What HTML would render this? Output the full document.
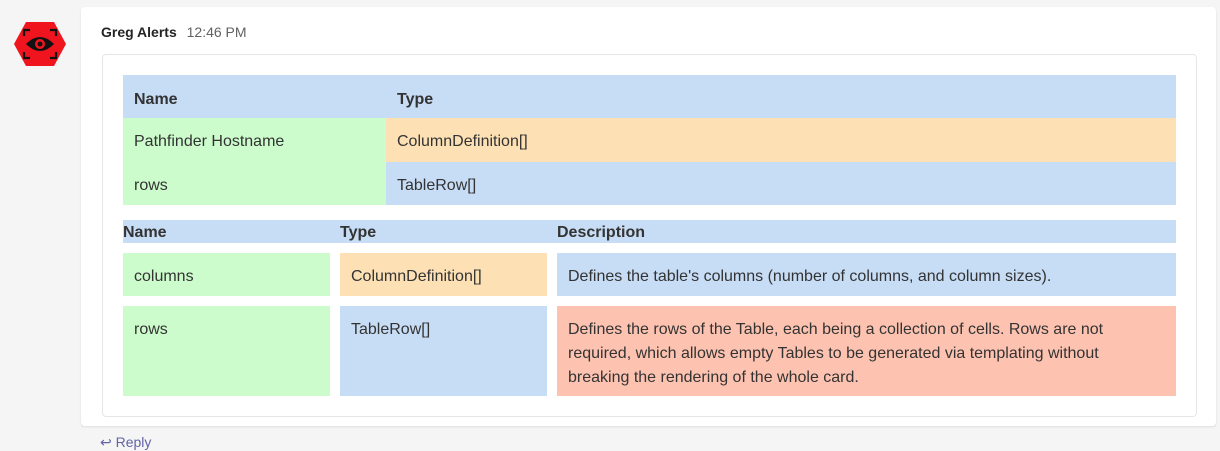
<!DOCTYPE html>
<html><head><style>
*{margin:0;padding:0;box-sizing:border-box}
body{width:1220px;height:444px;background:#f5f5f5;font-family:"Liberation Sans",sans-serif;color:#252423;position:relative;overflow:hidden}
.abs{position:absolute}
.msg{left:81px;top:7px;width:1135px;height:419px;background:#fff;border-radius:4px;box-shadow:0 1px 2px rgba(0,0,0,.1)}
.card{left:102px;top:54px;width:1095px;height:363px;border:1px solid #e6e6e6;border-radius:4px;background:#fff}
.c{position:absolute;font-size:16px;color:#333;padding-left:11px;line-height:20px}
.b{background:#c7dcf5}.g{background:#ccfccc}.o{background:#fde1b4}.r{background:#fdc3b0}
.h{font-weight:bold}
</style></head><body>
<svg class="abs" style="left:13px;top:20px" width="54" height="48" viewBox="0 0 54 48">
<polygon points="13,2 41,2 53,24 41,46 13,46 1,24" fill="#f0141e"/>
<g stroke="#111" stroke-width="2.2" fill="none">
<path d="M11,16 V10 H17 M37,10 H43 V16 M43,32 V38 H37 M17,38 H11 V32"/>
</g>
<path d="M13,24 Q27,10 41,24 Q27,38 13,24Z" fill="#111"/>
<circle cx="27" cy="24" r="5" fill="#f0141e"/><circle cx="27" cy="24" r="2.5" fill="#111"/>
</svg>
<div class="abs msg"></div>
<div class="abs" style="left:101px;top:24px;font-size:14px;font-weight:bold;color:#252423">Greg Alerts <span style="font-weight:normal;color:#616161;margin-left:6px">12:46 PM</span></div>
<div class="abs card"></div>
<div class="c b h" style="left:123px;top:75px;width:1053px;height:43px;padding-top:15px">Name</div>
<div class="c h" style="left:386px;top:75px;padding-top:15px">Type</div>
<div class="c g" style="left:123px;top:118px;width:263px;height:87px;padding-top:14px">Pathfinder Hostname</div>
<div class="c" style="left:123px;top:176px">rows</div>
<div class="c o" style="left:386px;top:118px;width:790px;height:44px;padding-top:14px">ColumnDefinition[]</div>
<div class="c b" style="left:386px;top:162px;width:790px;height:43px;padding-top:14px">TableRow[]</div>
<div class="c b h" style="left:123px;top:220px;width:1053px;height:23px;padding-left:0;padding-top:3px">Name</div>
<div class="c h" style="left:340px;top:223px;padding-left:0">Type</div>
<div class="c h" style="left:557px;top:223px;padding-left:0">Description</div>
<div class="c g" style="left:123px;top:253px;width:207px;height:43px;padding-top:14px">columns</div>
<div class="c o" style="left:340px;top:253px;width:207px;height:43px;padding-top:14px">ColumnDefinition[]</div>
<div class="c b" style="left:557px;top:253px;width:619px;height:43px;padding-top:14px">Defines the table's columns (number of columns, and column sizes).</div>
<div class="c g" style="left:123px;top:306px;width:207px;height:90px;padding-top:14px">rows</div>
<div class="c b" style="left:340px;top:306px;width:207px;height:90px;padding-top:14px">TableRow[]</div>
<div class="c r" style="left:557px;top:306px;width:619px;height:90px;padding-top:12px;padding-right:10px;line-height:24px">Defines the rows of the Table, each being a collection of cells. Rows are not<br>required, which allows empty Tables to be generated via templating without<br>breaking the rendering of the whole card.</div>
<div class="abs" style="left:81px;top:426px;width:1135px;height:1px;background:#e6e6e6"></div>
<div class="abs" style="left:100px;top:434px;font-size:14px;color:#6264a7">↩ Reply</div>
</body></html>
